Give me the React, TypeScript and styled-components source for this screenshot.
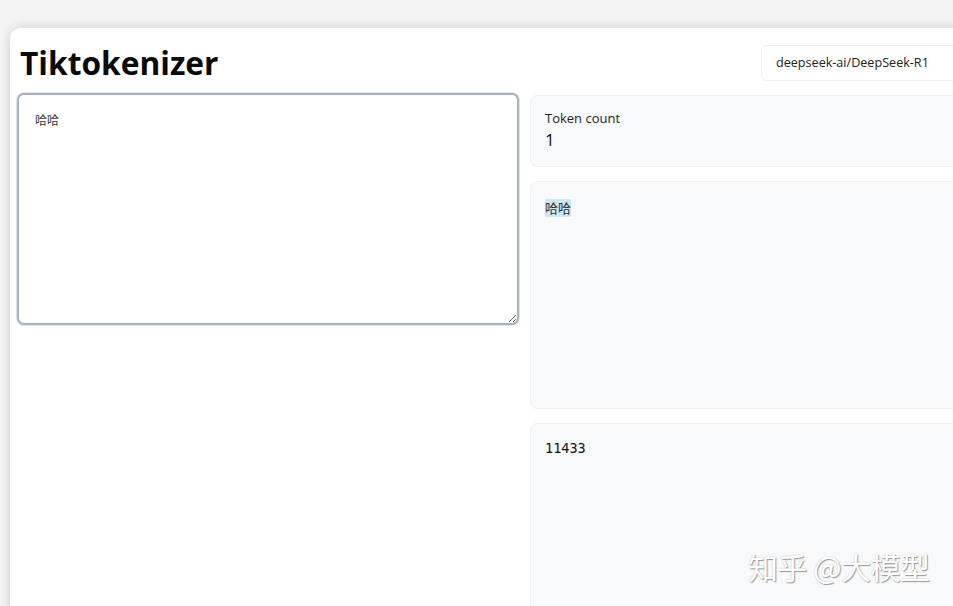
import styled, { createGlobalStyle } from 'styled-components';

const GlobalStyle = createGlobalStyle`
  html, body {
    margin: 0;
    padding: 0;
    background: #f4f4f4;
    overflow: hidden;
  }
  body {
    font-family: "Open Sans", "Noto Sans", "Noto Sans CJK SC", sans-serif;
    color: #111;
  }
`;

const Page = styled.div`
  position: relative;
  height: 606px;
  padding: 28px 0 0 10px;
  box-sizing: border-box;
`;

const Sheet = styled.main`
  width: 1032px;
  min-height: 600px;
  background: #fff;
  border-radius: 10px 0 0 0;
  box-shadow: 0 0 12px rgba(0, 0, 0, 0.16);
  padding: 16px 0 0 7px;
  box-sizing: border-box;
`;

const Header = styled.header`
  display: flex;
  align-items: center;
  justify-content: space-between;
  height: 37px;
  margin-bottom: 12px;
`;

const Title = styled.h1`
  margin: 0 0 0 3px;
  font-family: "Open Sans", sans-serif;
  font-size: 31.7px;
  font-weight: 700;
  color: #0a0a0a;
`;

const ModelSelect = styled.div`
  width: 270px;
  height: 36px;
  margin-right: 11px;
  box-sizing: border-box;
  border: 1px solid #eceef1;
  border-radius: 6px;
  padding: 0 14px;
  display: flex;
  align-items: center;
  font-size: 12.6px;
  color: #222;
`;

const Columns = styled.div`
  display: grid;
  grid-template-columns: 502px 1fr;
  column-gap: 11px;
  align-items: start;
`;

const Editor = styled.textarea`
  display: block;
  width: 502px;
  height: 232px;
  box-sizing: border-box;
  border: 2px solid #a8b1c0;
  border-radius: 7px;
  padding: 16px 16px;
  font-family: "Noto Sans CJK SC", sans-serif;
  font-size: 12px;
  color: #333;
  resize: both;
  outline: none;
  box-shadow: 0 0 0 1px #e1e5eb;
`;

const Stack = styled.div`
  display: flex;
  flex-direction: column;
  gap: 14px;
  padding-top: 2px;
`;

const Panel = styled.section<{ $height: number }>`
  height: ${(p) => p.$height}px;
  box-sizing: border-box;
  background: #f8f9fb;
  border: 1px solid #eef0f3;
  border-radius: 7px;
  padding: 14px 14px;
`;

const Label = styled.div`
  font-size: 13px;
  line-height: 17px;
  color: #222;
`;

const Count = styled.div`
  margin-top: 1px;
  font-size: 17px;
  line-height: 23px;
  color: #111;
`;

const Segment = styled.span`
  display: inline-block;
  margin-top: 3px;
  background: #cde6f6;
  font-family: "Noto Sans CJK SC", sans-serif;
  font-size: 13px;
  line-height: 18px;
  color: #333;
`;

const TokenIds = styled.div`
  margin-top: 2px;
  font-family: "DejaVu Sans Mono", monospace;
  font-size: 13.5px;
  color: #111;
`;

const Watermark = styled.div`
  position: absolute;
  left: 748px;
  top: 544px;
  font-family: "Noto Sans CJK SC", sans-serif;
  font-size: 30px;
  color: #fff;
  letter-spacing: -0.5px;
  text-shadow: 1px 1px 1px rgba(0, 0, 0, 0.35), 0 0 2px rgba(0, 0, 0, 0.2);
`;

export default function App() {
  return (
    <>
      <GlobalStyle />
      <Page>
        <Sheet>
          <Header>
            <Title>Tiktokenizer</Title>
            <ModelSelect>deepseek-ai/DeepSeek-R1</ModelSelect>
          </Header>
          <Columns>
            <Editor defaultValue="哈哈" />
            <Stack>
              <Panel $height={72}>
                <Label>Token count</Label>
                <Count>1</Count>
              </Panel>
              <Panel $height={228}>
                <Segment>哈哈</Segment>
              </Panel>
              <Panel $height={200}>
                <TokenIds>11433</TokenIds>
              </Panel>
            </Stack>
          </Columns>
        </Sheet>
        <Watermark>知乎 @大模型</Watermark>
      </Page>
    </>
  );
}
